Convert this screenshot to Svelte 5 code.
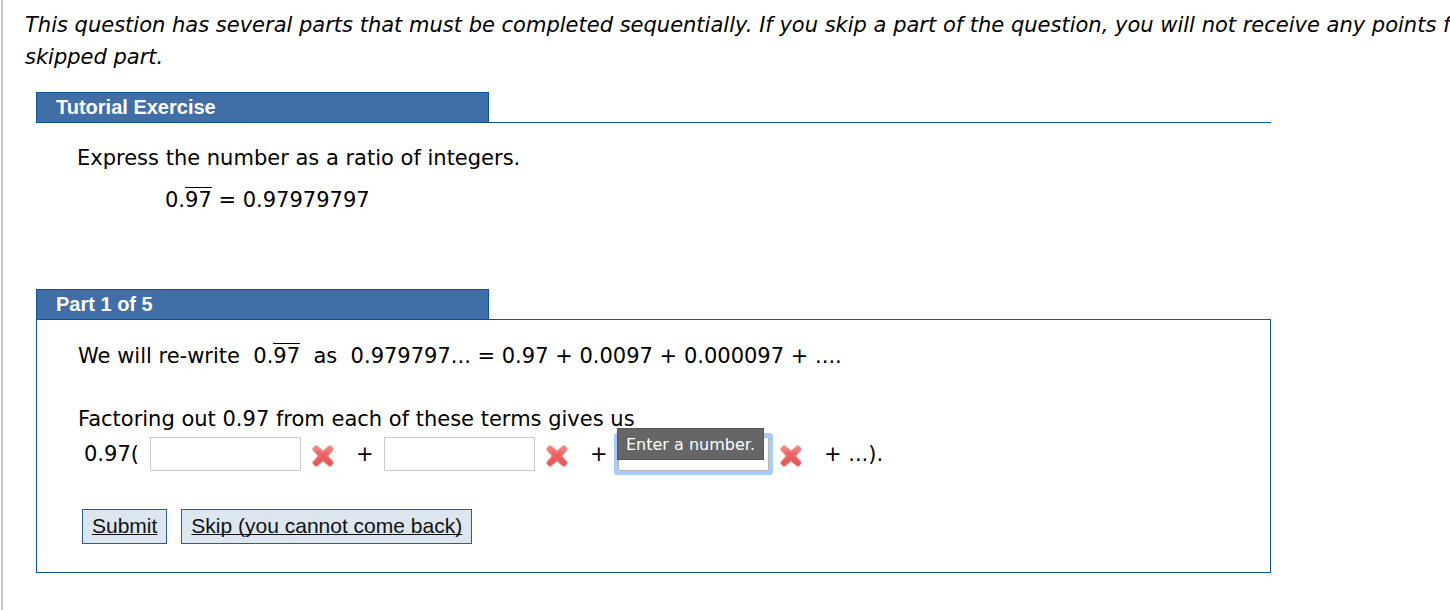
<script>
  let answers = $state(['', '', '']);
</script>

{#snippet cross()}
  <svg class="cross" viewBox="0 0 22 22" role="img" aria-label="Incorrect">
    <defs>
      <linearGradient id="crossFill" x1="0" y1="0" x2="0" y2="1">
        <stop offset="0" stop-color="#f08a88" />
        <stop offset="0.5" stop-color="#ea6866" />
        <stop offset="1" stop-color="#e25553" />
      </linearGradient>
    </defs>
    <path
      d="M5.2 0.9 L11 5.8 L16.8 0.9 Q18.1 0.2 19.2 1.2 L20.8 2.8 Q21.8 3.9 21.1 5.2 L16 11 L21.1 16.8 Q21.8 18.1 20.8 19.2 L19.2 20.8 Q18.1 21.8 16.8 21.1 L11 16.2 L5.2 21.1 Q3.9 21.8 2.8 20.8 L1.2 19.2 Q0.2 18.1 0.9 16.8 L6 11 L0.9 5.2 Q0.2 3.9 1.2 2.8 L2.8 1.2 Q3.9 0.2 5.2 0.9 Z"
      fill="url(#crossFill)"
      stroke="#f2a19f"
      stroke-width="1"
    />
    <path d="M7 7 L15 15 M15 7 L7 15" stroke="#e4504e" stroke-width="2" stroke-linecap="round" opacity="0.4" />
  </svg>
{/snippet}

<main>
  <p class="intro">
    This question has several parts that must be completed sequentially. If you skip a part of the question, you will not receive any points for<br />skipped part.
  </p>

  <section class="tutorial">
    <h2>Tutorial Exercise</h2>
    <div class="exercise">
      <p>Express the number as a ratio of integers.</p>
      <p class="equation">0.<span class="bar">97</span> = 0.97979797</p>
    </div>
  </section>

  <section class="part">
    <h2>Part 1 of 5</h2>
    <form onsubmit={(e) => e.preventDefault()}>
      <p>We will re-write&nbsp; 0.<span class="bar">97</span>&nbsp; as&nbsp; 0.979797... = 0.97 + 0.0097 + 0.000097 + ....</p>
      <p class="factor">Factoring out 0.97 from each of these terms gives us</p>
      <div class="terms">
        <span class="lead">0.97(</span>
        {#each answers as _, i}
          <span class="field" class:active={i === 2}>
            <input type="text" aria-label={'Term ' + (i + 1)} aria-describedby={i === 2 ? 'hint' : undefined} bind:value={answers[i]} />
            {#if i === 2}<span class="tip" id="hint" role="tooltip">Enter a number.</span>{/if}
          </span>
          {@render cross()}
          <span class="plus">{i < 2 ? '+' : '+ ...).'}</span>
        {/each}
      </div>
      <div class="actions">
        <button type="submit">Submit</button>
        <button type="button">Skip (you cannot come back)</button>
      </div>
    </form>
  </section>
</main>

<style>
  :global(body) {
    margin: 0;
    background: #fff;
  }
  main {
    box-sizing: border-box;
    min-height: 100vh;
    margin-left: 1px;
    padding: 9px 0 36px;
    border-left: 2px solid #c8c8c8;
    overflow: hidden;
    color: #000;
    font: 21px/32px Verdana, "DejaVu Sans", sans-serif;
  }
  p {
    margin: 0;
  }
  .intro {
    padding-left: 22px;
    font-style: italic;
    white-space: nowrap;
  }
  section {
    margin: 19px 179px 0 33px;
  }
  h2 {
    box-sizing: border-box;
    width: 453px;
    max-width: 100%;
    height: 30px;
    margin: 0;
    padding-left: 19px;
    border: 1px solid #0b539b;
    border-bottom: 0;
    background: #406fa7;
    color: #fff;
    font: bold 20px/28px "Liberation Sans", Arial, sans-serif;
  }
  .exercise {
    padding: 19px 40px 73px 41px;
    border-top: 1px solid #0b539b;
  }
  .equation {
    margin-top: 10px;
    padding-left: 88px;
  }
  .bar {
    display: inline-block;
    height: 24px;
    border-top: 1px solid #000;
    line-height: 24px;
  }
  .part {
    margin-top: 0;
  }
  form {
    padding: 20px 40px 28px 41px;
    border: 1px solid #0b539b;
  }
  .factor {
    margin-top: 31px;
  }
  .terms {
    display: flex;
    align-items: center;
    margin-top: 2px;
    padding-left: 6px;
    white-space: nowrap;
  }
  .lead {
    width: 66px;
  }
  .field {
    position: relative;
    display: flex;
  }
  input {
    box-sizing: border-box;
    width: 151px;
    height: 34px;
    padding: 2px 6px;
    border: 1px solid #ccc;
    background: #fff;
    font: inherit;
    outline: none;
  }
  .active input {
    border-color: #b5b5b5;
    border-radius: 1px;
    box-shadow: 0 0 0 4px #a7ccfa;
  }
  .tip {
    position: absolute;
    top: -9px;
    left: -1px;
    box-sizing: border-box;
    height: 32px;
    padding: 0 8px;
    border: 1px solid #555;
    background: #666;
    color: #fff;
    font-size: 16px;
    line-height: 32px;
  }
  .cross {
    flex: none;
    width: 22px;
    height: 22px;
    margin: 4px 22px 0 11px;
  }
  .plus {
    min-width: 28px;
  }
  .actions {
    display: flex;
    gap: 14px;
    margin-top: 38px;
    padding-left: 4px;
  }
  button {
    height: 35px;
    padding: 0 9px 2px;
    border: 1px solid #2a5c9c;
    border-radius: 0;
    background: #dce6ef;
    color: #111;
    font: 21px/30px "Liberation Sans", Arial, sans-serif;
    text-decoration: underline;
    text-decoration-thickness: 1px;
    text-decoration-skip-ink: none;
  }
</style>
